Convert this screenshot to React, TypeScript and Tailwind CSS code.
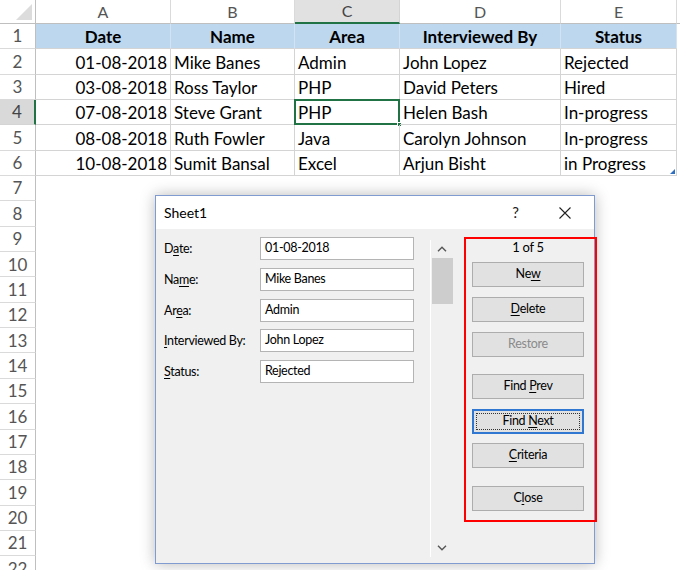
import React from "react";

const columns = [
  { key: "A", w: "w-[135px]" },
  { key: "B", w: "w-[124px]" },
  { key: "C", w: "w-[105px]" },
  { key: "D", w: "w-[161px]" },
  { key: "E", w: "w-[116px]" },
];

const header = ["Date", "Name", "Area", "Interviewed By", "Status"];

const data = [
  ["01-08-2018", "Mike Banes", "Admin", "John Lopez", "Rejected"],
  ["03-08-2018", "Ross Taylor", "PHP", "David Peters", "Hired"],
  ["07-08-2018", "Steve Grant", "PHP", "Helen Bash", "In-progress"],
  ["08-08-2018", "Ruth Fowler", "Java", "Carolyn Johnson", "In-progress"],
  ["10-08-2018", "Sumit Bansal", "Excel", "Arjun Bisht", "in Progress"],
];

const fields = [
  { pre: "D", key: "a", post: "te:", value: "01-08-2018" },
  { pre: "Na", key: "m", post: "e:", value: "Mike Banes" },
  { pre: "Ar", key: "e", post: "a:", value: "Admin" },
  { pre: "", key: "I", post: "nterviewed By:", value: "John Lopez" },
  { pre: "", key: "S", post: "tatus:", value: "Rejected" },
];

function RowHeader({ n, active }: { n: number; active?: boolean }) {
  return (
    <div
      className={
        active
          ? "w-[36px] shrink-0 flex items-center justify-center bg-[#d9d9d9] border-r-2 border-r-[#217346] border-b border-b-[#d4d4d4] text-[#444]"
          : "w-[36px] shrink-0 flex items-center justify-center bg-white border-r border-r-[#bfbfbf] border-b border-b-[#dadada] text-[#555]"
      }
    >
      {n}
    </div>
  );
}

function Chevron({ up }: { up?: boolean }) {
  return (
    <svg width="10" height="6" viewBox="0 0 10 6" className="block">
      <polyline
        points={up ? "1,5.2 5,1.2 9,5.2" : "1,0.8 5,4.8 9,0.8"}
        fill="none"
        stroke="#555"
        strokeWidth="1.4"
      />
    </svg>
  );
}

function DlgButton({
  children,
  disabled,
  focused,
  className = "",
}: {
  children: React.ReactNode;
  disabled?: boolean;
  focused?: boolean;
  className?: string;
}) {
  if (focused) {
    return (
      <div
        className={`h-[25px] w-[112px] border-2 border-[#2f77d1] bg-[#e1e1e1] p-[2px] ${className}`}
      >
        <div className="h-full w-full border border-dotted border-[#333] flex items-center justify-center text-black">
          <span>{children}</span>
        </div>
      </div>
    );
  }
  return (
    <div
      className={`h-[25px] w-[112px] border border-[#adadad] bg-[#e1e1e1] flex items-center justify-center ${
        disabled ? "text-[#8a8a8a]" : "text-black"
      } ${className}`}
    >
      <span>{children}</span>
    </div>
  );
}

export default function App() {
  return (
    <div className="relative w-[680px] h-[570px] overflow-hidden bg-white font-['Lato','Liberation_Sans',sans-serif] text-black">
      {/* column headers */}
      <div className="flex h-[24px] text-[16px]">
        <div className="w-[36px] shrink-0 border-r border-r-[#bfbfbf] border-b border-b-[#bfbfbf] bg-white flex items-end justify-end p-[3px]">
          <svg width="16" height="16" viewBox="0 0 16 16">
            <polygon points="16,0 16,16 0,16" fill="#dcdcdc" />
          </svg>
        </div>
        {columns.map((c) =>
          c.key === "C" ? (
            <div
              key={c.key}
              className={`${c.w} shrink-0 flex items-center justify-center bg-[#e1e1e1] border-r border-r-[#d4d4d4] border-b-2 border-b-[#217346] text-[#444]`}
            >
              {c.key}
            </div>
          ) : (
            <div
              key={c.key}
              className={`${c.w} shrink-0 flex items-center justify-center bg-white border-r border-r-[#dadada] border-b border-b-[#bfbfbf] text-[#555]`}
            >
              {c.key}
            </div>
          )
        )}
        <div className="flex-1 border-b border-b-[#bfbfbf]" />
      </div>

      {/* table header row */}
      <div className="flex h-[25.35px] text-[17px]">
        <RowHeader n={1} />
        {columns.map((c, i) => (
          <div
            key={c.key}
            className={`${c.w} shrink-0 flex items-center justify-center pt-[2px] bg-[#bdd7ee] border-r border-r-[#d4e3f2] border-b border-b-[#d4d4d4] font-bold`}
          >
            {header[i]}
          </div>
        ))}
      </div>

      {/* data rows */}
      {data.map((r, ri) => (
        <div key={ri} className="flex h-[25.35px] text-[17px]">
          <RowHeader n={ri + 2} active={ri === 2} />
          {columns.map((c, ci) => (
            <div
              key={c.key}
              className={`${c.w} shrink-0 relative flex items-center pt-[2px] px-[3px] border-r border-r-[#d4d4d4] border-b border-b-[#d4d4d4] ${
                ci === 0 ? "justify-end" : "justify-start"
              }`}
            >
              {r[ci]}
              {ri === 2 && ci === 2 && (
                <div className="absolute -left-px -top-px right-[-1px] bottom-[-1px] border-2 border-[#217346]">
                  <div className="absolute right-[-4px] bottom-[-4px] w-[5px] h-[5px] bg-[#217346] border border-white" />
                </div>
              )}
              {ri === 4 && ci === 4 && (
                <svg
                  width="5"
                  height="5"
                  viewBox="0 0 5 5"
                  className="absolute right-[1px] bottom-[1px]"
                >
                  <polygon points="5,0 5,5 0,5" fill="#2f6fbf" />
                </svg>
              )}
            </div>
          ))}
        </div>
      ))}

      {/* empty rows */}
      {Array.from({ length: 16 }, (_, i) => (
        <div key={i} className="flex h-[25.35px] text-[17px]">
          <RowHeader n={i + 7} />
        </div>
      ))}

      {/* data form dialog */}
      <div className="absolute left-[155px] top-[195px] w-[440px] h-[369px] border border-[#7f9bd0] bg-[#f0f0f0] shadow-[0_0_14px_rgba(0,0,0,0.28)] flex flex-col text-[12.5px] tracking-[-0.3px]">
        <div className="h-[33px] shrink-0 bg-white flex items-center pl-[8px] text-[14px] tracking-normal">
          <span>Sheet1</span>
          <span className="ml-[305px] text-[15px] text-[#222]">?</span>
          <svg width="12" height="12" viewBox="0 0 12 12" className="ml-[40px]">
            <path d="M0.5 0.5 L11.5 11.5 M11.5 0.5 L0.5 11.5" stroke="#222" strokeWidth="1.1" />
          </svg>
        </div>
        <div className="flex-1 flex">
          <div className="flex flex-col gap-[7.75px] pt-[8px] pl-[8px]">
            {fields.map((f) => (
              <div key={f.value} className="flex items-center h-[23px] pt-[2px]">
                <div className="w-[96px] shrink-0">
                  {f.pre}
                  <span className="underline underline-offset-2">{f.key}</span>
                  {f.post}
                </div>
                <div className="w-[154px] h-[23px] -mt-[2px] bg-white border border-[#b4b4b4] flex items-center pl-[4px]">
                  {f.value}
                </div>
              </div>
            ))}
          </div>
          <div className="ml-[16px] mt-[11px] w-[23px] h-[317px] border-l border-l-white flex flex-col items-center">
            <div className="h-[18px] flex items-center">
              <Chevron up />
            </div>
            <div className="w-[21px] h-[46px] bg-[#cdcdcd]" />
            <div className="flex-1" />
            <div className="h-[18px] flex items-center">
              <Chevron />
            </div>
          </div>
          <div className="ml-[19px] pt-[9px] flex flex-col items-start">
            <div className="w-[112px] h-[18px] leading-[18px] text-center text-[13px]">1 of 5</div>
            <DlgButton className="mt-[6px]">
              Ne<span className="underline underline-offset-2">w</span>
            </DlgButton>
            <DlgButton className="mt-[10px]">
              <span className="underline underline-offset-2">D</span>elete
            </DlgButton>
            <DlgButton className="mt-[10px]" disabled>
              Restore
            </DlgButton>
            <DlgButton className="mt-[17px]">
              Find <span className="underline underline-offset-2">P</span>rev
            </DlgButton>
            <DlgButton className="mt-[10px]" focused>
              Find <span className="underline underline-offset-2">N</span>ext
            </DlgButton>
            <DlgButton className="mt-[9px]">
              <span className="underline underline-offset-2">C</span>riteria
            </DlgButton>
            <DlgButton className="mt-[18px]">
              C<span className="underline underline-offset-2">l</span>ose
            </DlgButton>
          </div>
        </div>
      </div>

      {/* red highlight annotation */}
      <div className="absolute left-[464px] top-[237px] w-[133px] h-[285px] border-2 border-[#ff0000] pointer-events-none" />
    </div>
  );
}
